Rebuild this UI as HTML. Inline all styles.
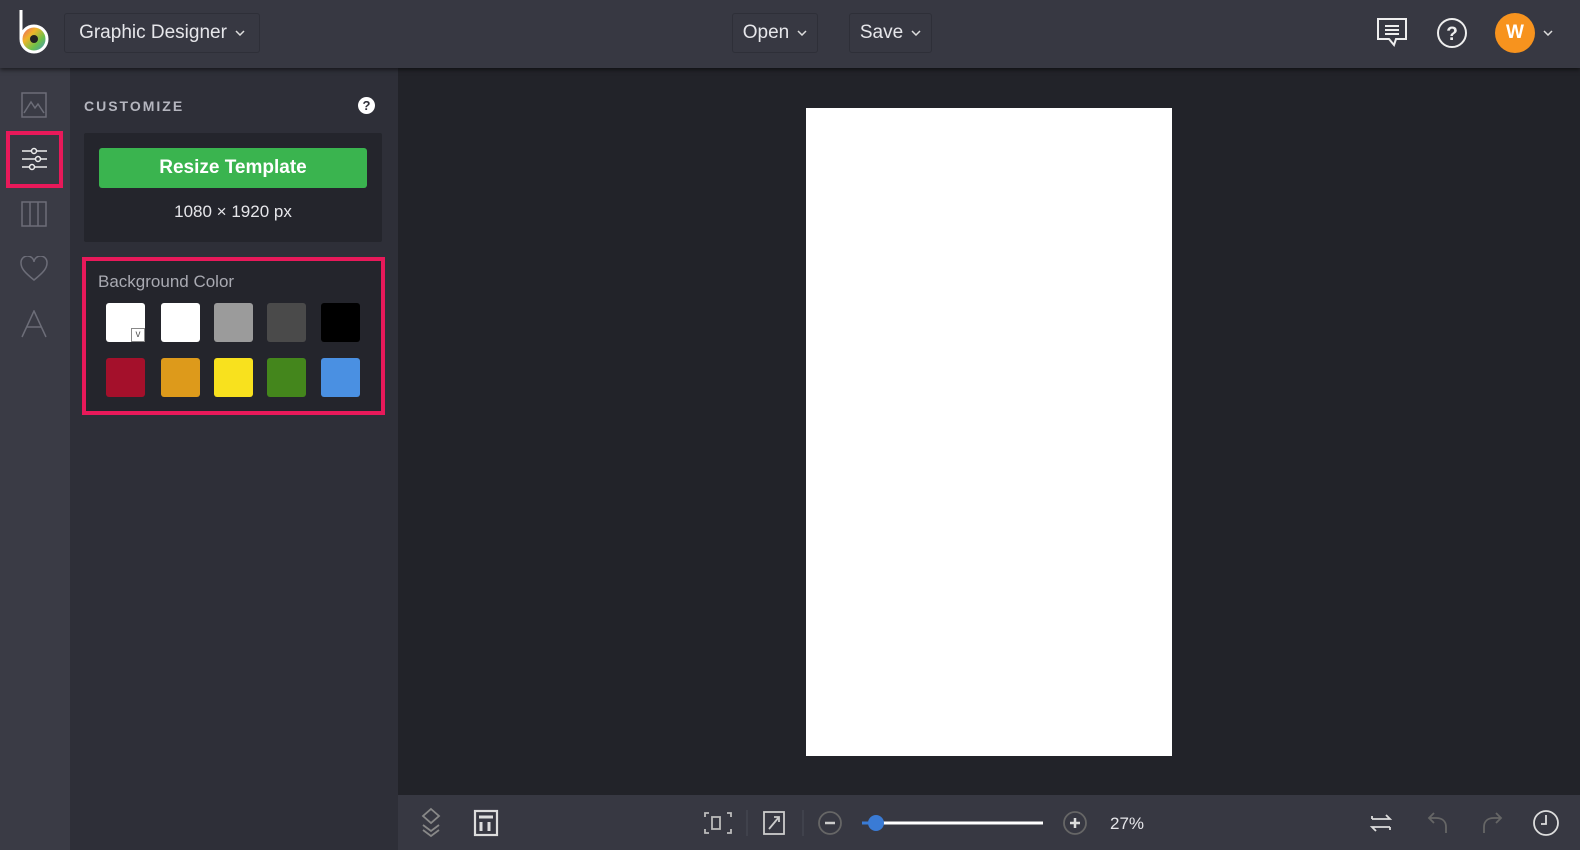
<!DOCTYPE html>
<html><head><style>
*{margin:0;padding:0;box-sizing:border-box}
body{width:1580px;height:850px;background:#222329;font-family:"Liberation Sans",sans-serif;position:relative;overflow:hidden;color:#e8e8ec}
.a{position:absolute}
.hdr{left:0;top:0;width:1580px;height:68px;background:#373842;box-shadow:0 2px 4px rgba(0,0,0,.5);z-index:2}
.btn{border:1px solid #2e2f38;border-radius:3px;font-size:19px;color:#e6e6ea;display:flex;align-items:center;justify-content:center;gap:8px}
.rail{left:0;top:68px;width:70px;height:782px;background:#3a3b45}
.panel{left:70px;top:68px;width:328px;height:782px;background:#2e2f38}
.sw{width:39px;height:39px;border-radius:3px}
.bb{left:398px;top:795px;width:1182px;height:55px;background:#373842}
</style></head><body>
<div class="a hdr">
 <svg class="a" style="left:16px;top:8px" width="36" height="48" viewBox="0 0 36 48">
  <defs><linearGradient id="g" x1="0" y1="0" x2="1" y2="1"><stop offset="0" stop-color="#e64a7a"/><stop offset=".35" stop-color="#f0b429"/><stop offset=".65" stop-color="#6cc04a"/><stop offset="1" stop-color="#3b8ede"/></linearGradient></defs>
  <circle cx="18" cy="31" r="13" fill="url(#g)" stroke="#fff" stroke-width="3"/>
  <circle cx="18" cy="31" r="4" fill="#222"/>
  <line x1="5" y1="2" x2="5" y2="31" stroke="#fff" stroke-width="3"/>
 </svg>
 <div class="a btn" style="left:64px;top:13px;width:196px;height:40px">Graphic Designer <svg width="10" height="6" viewBox="0 0 10 6"><path d="M1 1l4 4 4-4" fill="none" stroke="#ddd" stroke-width="1.5"/></svg></div>
 <div class="a btn" style="left:732px;top:13px;width:86px;height:40px">Open <svg width="10" height="6" viewBox="0 0 10 6"><path d="M1 1l4 4 4-4" fill="none" stroke="#ddd" stroke-width="1.5"/></svg></div>
 <div class="a btn" style="left:849px;top:13px;width:83px;height:40px">Save <svg width="10" height="6" viewBox="0 0 10 6"><path d="M1 1l4 4 4-4" fill="none" stroke="#ddd" stroke-width="1.5"/></svg></div>
 <svg class="a" style="left:1376px;top:17px" width="32" height="32" viewBox="0 0 32 32" fill="none" stroke="#eee" stroke-width="2"><path d="M2 2h28v20H20l-2 6-5-6H2z"/><path d="M9 9h14M9 13h14M9 17h14"/></svg>
 <svg class="a" style="left:1436px;top:17px" width="32" height="32" viewBox="0 0 32 32"><circle cx="16" cy="16" r="14" fill="none" stroke="#eee" stroke-width="2"/><text x="16" y="23" text-anchor="middle" font-size="19" font-weight="bold" fill="#eee" font-family="Liberation Sans">?</text></svg>
 <div class="a" style="left:1495px;top:13px;width:40px;height:40px;border-radius:50%;background:#f7931e;color:#fff;font-weight:bold;font-size:19px;display:flex;align-items:center;justify-content:center">W</div>
 <svg class="a" style="left:1543px;top:30px" width="10" height="6" viewBox="0 0 10 6"><path d="M1 1l4 4 4-4" fill="none" stroke="#ddd" stroke-width="1.5"/></svg>
</div>
<div class="a rail">
 <svg class="a" style="left:21px;top:24px" width="26" height="26" viewBox="0 0 26 26" fill="none" stroke="#6c6d78" stroke-width="1.5"><rect x="1" y="1" width="24" height="24"/><path d="M3 21l7-11 4 6 3-4 6 9"/></svg>
 <div class="a" style="left:6px;top:63px;width:57px;height:57px;border:4px solid #e8195a;background:#373842"></div>
 <svg class="a" style="left:21px;top:78px" width="26" height="26" viewBox="0 0 26 26" fill="none" stroke="#eee" stroke-width="1.5"><path d="M1 5h25M1 13h25M1 21h25"/><circle cx="13" cy="5" r="2.5" fill="#373842"/><circle cx="17" cy="13" r="2.5" fill="#373842"/><circle cx="11" cy="21" r="2.5" fill="#373842"/></svg>
 <svg class="a" style="left:21px;top:133px" width="26" height="26" viewBox="0 0 26 26" fill="none" stroke="#6c6d78" stroke-width="1.5"><rect x="1" y="1" width="24" height="24"/><path d="M9 1v24M17 1v24"/></svg>
 <svg class="a" style="left:20px;top:188px" width="28" height="26" viewBox="0 0 28 26" fill="none" stroke="#6c6d78" stroke-width="1.5"><path d="M14 24C4 16 1 12 1 7a6 6 0 0 1 13-1 6 6 0 0 1 13 1c0 5-3 9-13 17z"/></svg>
 <svg class="a" style="left:21px;top:242px" width="26" height="28" viewBox="0 0 26 28" fill="none" stroke="#6c6d78" stroke-width="1.5"><path d="M1 27L13 1l12 26M6 17h14"/></svg>
</div>
<div class="a panel">
 <div class="a" style="left:14px;top:30px;font-size:14px;letter-spacing:2px;color:#b5b6bf;font-weight:bold">CUSTOMIZE</div>
 <div class="a" style="left:288px;top:29px;width:17px;height:17px;border-radius:50%;background:#fff;color:#2e2f38;font-size:13px;font-weight:bold;text-align:center;line-height:17px">?</div>
 <div class="a" style="left:14px;top:65px;width:298px;height:109px;background:#24252c;border-radius:2px">
  <div class="a" style="left:15px;top:15px;width:268px;height:40px;background:#3ab44f;border-radius:3px;color:#fff;font-size:19px;font-weight:bold;text-align:center;line-height:40px">Resize Template</div>
  <div class="a" style="left:0;top:69px;width:298px;text-align:center;font-size:17px;color:#e6e6ea">1080 × 1920 px</div>
 </div>
 <div class="a" style="left:12px;top:189px;width:303px;height:158px;border:4px solid #e8195a;background:#24252c">
  <div class="a" style="left:12px;top:11px;font-size:17px;color:#a9aab2">Background Color</div>
  <div class="a sw" style="left:20px;top:42px;background:#fff"><div class="a" style="right:0;bottom:0;width:14px;height:14px;border:1px solid #888;background:#fff;font-size:10px;color:#555;text-align:center;line-height:12px">v</div></div>
  <div class="a sw" style="left:75px;top:42px;background:#fff"></div>
  <div class="a sw" style="left:128px;top:42px;background:#9b9b9b"></div>
  <div class="a sw" style="left:181px;top:42px;background:#4a4a4a"></div>
  <div class="a sw" style="left:235px;top:42px;background:#000"></div>
  <div class="a sw" style="left:20px;top:97px;background:#a4102b"></div>
  <div class="a sw" style="left:75px;top:97px;background:#dd9a1b"></div>
  <div class="a sw" style="left:128px;top:97px;background:#f8e11e"></div>
  <div class="a sw" style="left:181px;top:97px;background:#44861c"></div>
  <div class="a sw" style="left:235px;top:97px;background:#4a90e2"></div>
 </div>
</div>
<div class="a" style="left:806px;top:108px;width:366px;height:648px;background:#fff"></div>
<div class="a bb"></div>
<svg class="a" style="left:0;top:795px" width="1580" height="55" fill="none" stroke="#ddd" stroke-width="1.8">
 <g stroke="#888"><path d="M431 14l8 7-8 7-8-7z"/><path d="M423 30l8 6 8-6M423 35l8 6 8-6"/></g>
 <rect x="475" y="16" width="22" height="24" stroke-width="2.2"/><path d="M479 22h14M481 27v9M489 27v9" stroke-width="3"/>
 <path d="M709 18h-4v4M727 18h4v4M709 38h-4v-4M727 38h4v-4" stroke="#bbb"/><rect x="712" y="22" width="8" height="12" stroke="#bbb"/>
 <path d="M747 15v26M803 15v26" stroke="#4a4b55" stroke-width="1"/>
 <rect x="764" y="17" width="20" height="22" stroke="#ccc"/><path d="M769 34l10-12M774 22h5v5" stroke="#ccc"/>
 <circle cx="830" cy="28" r="11" stroke="#666"/><path d="M825 28h10" stroke="#ccc" stroke-width="2.5"/>
 <path d="M866 28h177" stroke="#fff" stroke-width="3"/><path d="M862 28h14" stroke="#3a7bd5" stroke-width="3"/>
 <circle cx="1075" cy="28" r="11" stroke="#666"/><path d="M1070 28h10M1075 23v10" stroke="#ddd" stroke-width="2.5"/>
 <path d="M1372 24h18l-4-4M1390 32h-18l4 4M1372 24v-3M1390 32v3"/>
 <path d="M1446 38v-6c0-6-4-9-10-9h-6M1434 18l-5 5 5 5" stroke="#666"/>
 <path d="M1484 38v-6c0-6 4-9 10-9h6M1496 18l5 5-5 5" stroke="#666"/>
 <circle cx="1546" cy="28" r="12"/><path d="M1546 20v9h-5"/>
</svg>
<svg class="a" style="left:0;top:0;pointer-events:none" width="1580" height="850"><circle cx="876" cy="823" r="8" fill="#3a7bd5"/><text x="1110" y="829" font-size="17" fill="#e6e6ea" font-family="Liberation Sans">27%</text></svg>
</body></html>
